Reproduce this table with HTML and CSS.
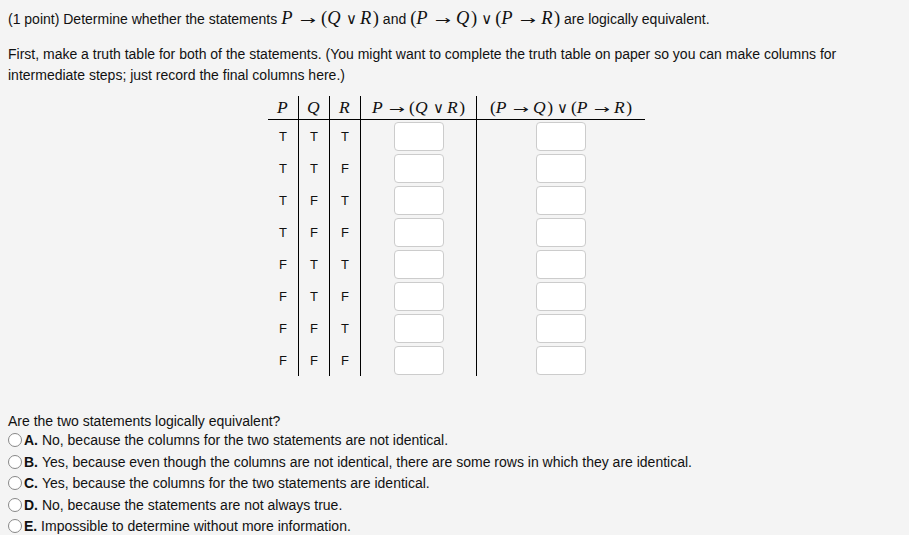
FILE: index.html
```html
<!DOCTYPE html>
<html>
<head>
<meta charset="utf-8">
<link rel="stylesheet" href="styles.css">
</head>
<body>
<div class="page">
  <p class="intro">(1 point) Determine whether the statements <span class="m"><i>P</i><span class="ar">→</span>(<i>Q</i><span class="or">∨</span><i>R</i>)</span> and <span class="m">(<i>P</i><span class="ar">→</span><i>Q</i>)<span class="or">∨</span>(<i>P</i><span class="ar">→</span><i>R</i>)</span> are logically equivalent.</p>
  <p class="first">First, make a truth table for both of the statements. (You might want to complete the truth table on paper so you can make columns for intermediate steps; just record the final columns here.)</p>
  <table class="tt">
    <thead>
      <tr>
        <th class="c1"><span class="m"><i>P</i></span></th>
        <th class="c2"><span class="m"><i>Q</i></span></th>
        <th class="c3"><span class="m"><i>R</i></span></th>
        <th class="c4"><span class="m"><i>P</i><span class="ar">→</span>(<i>Q</i><span class="or">∨</span><i>R</i>)</span></th>
        <th class="c5"><span class="m">(<i>P</i><span class="ar">→</span><i>Q</i>)<span class="or">∨</span>(<i>P</i><span class="ar">→</span><i>R</i>)</span></th>
      </tr>
    </thead>
    <tbody>
      <tr><td>T</td><td>T</td><td>T</td><td><span class="box"></span></td><td><span class="box"></span></td></tr>
      <tr><td>T</td><td>T</td><td>F</td><td><span class="box"></span></td><td><span class="box"></span></td></tr>
      <tr><td>T</td><td>F</td><td>T</td><td><span class="box"></span></td><td><span class="box"></span></td></tr>
      <tr><td>T</td><td>F</td><td>F</td><td><span class="box"></span></td><td><span class="box"></span></td></tr>
      <tr><td>F</td><td>T</td><td>T</td><td><span class="box"></span></td><td><span class="box"></span></td></tr>
      <tr><td>F</td><td>T</td><td>F</td><td><span class="box"></span></td><td><span class="box"></span></td></tr>
      <tr><td>F</td><td>F</td><td>T</td><td><span class="box"></span></td><td><span class="box"></span></td></tr>
      <tr><td>F</td><td>F</td><td>F</td><td><span class="box"></span></td><td><span class="box"></span></td></tr>
    </tbody>
  </table>
  <p class="question">Are the two statements logically equivalent?</p>
  <ul class="opts">
    <li><span class="radio"></span><b>A.</b>&nbsp;No, because the columns for the two statements are not identical.</li>
    <li><span class="radio"></span><b>B.</b>&nbsp;Yes, because even though the columns are not identical, there are some rows in which they are identical.</li>
    <li><span class="radio"></span><b>C.</b>&nbsp;Yes, because the columns for the two statements are identical.</li>
    <li><span class="radio"></span><b>D.</b>&nbsp;No, because the statements are not always true.</li>
    <li><span class="radio"></span><b>E.</b>&nbsp;Impossible to determine without more information.</li>
  </ul>
</div>
</body>
</html>
```

FILE: styles.css
```css
html, body {
  margin: 0;
  padding: 0;
  background: #f4f4f4;
}
body {
  font-family: "Liberation Sans", Arial, sans-serif;
  font-size: 14px;
  color: #111;
}
.page {
  padding: 8px 8px 0 8px;
}
p {
  margin: 0;
  line-height: 21px;
}
.m {
  font-family: "Liberation Serif", "Times New Roman", serif;
  font-size: 18.5px;
  white-space: nowrap;
}
.m i {
  font-style: italic;
  padding-right: 1.5px;
}
.ar {
  display: inline-block;
  width: 17px;
  margin: 0 5px;
  text-align: center;
  font-family: "DejaVu Sans", sans-serif;
  font-size: 12px;
  transform: scaleX(1.6);
}
.or {
  display: inline-block;
  width: 10px;
  margin: 0 4px;
  text-align: center;
  font-family: "DejaVu Sans", sans-serif;
  font-size: 15px;
}
.first {
  margin-top: 13px;
}
.tt {
  border-collapse: collapse;
  margin: 10px auto 0 auto;
  position: relative;
  left: 2px;
  font-size: 13px;
}
.tt .m {
  font-size: 17.5px;
}
.tt .ar {
  margin: 0 4px;
}
.tt th {
  height: 23px;
  padding: 0 5px;
  font-weight: normal;
  border-bottom: 1px solid #000;
  vertical-align: middle;
  line-height: 20px;
}
.tt th + th, .tt td + td {
  border-left: 1px solid #000;
}
.tt td {
  height: 32px;
  padding: 0;
  text-align: center;
  vertical-align: middle;
}
.c1 { width: 20px; }
.c2 { width: 20px; }
.c3 { width: 20px; }
.c4 { width: 105px; }
.c5 { width: 158px; }
.box {
  display: inline-block;
  width: 48px;
  height: 27px;
  border: 1px solid #ccc;
  border-radius: 4px;
  background: #fff;
  vertical-align: middle;
}
.question {
  margin-top: 35px;
}
.opts {
  list-style: none;
  margin: -2px 0 0 0;
  padding: 0;
}
.opts li {
  display: block;
  height: 21.5px;
  line-height: 21.5px;
  white-space: nowrap;
}
.radio {
  display: inline-block;
  width: 12px;
  height: 12px;
  border: 1px solid #888;
  border-radius: 50%;
  background: #fff;
  margin-right: 2px;
  vertical-align: -2px;
}
```
